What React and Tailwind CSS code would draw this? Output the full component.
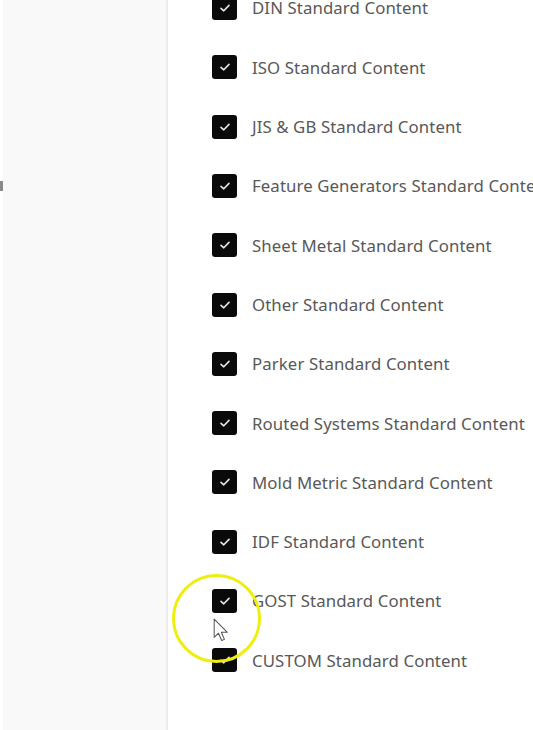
import React from 'react';

const items = [
  'DIN Standard Content',
  'ISO Standard Content',
  'JIS & GB Standard Content',
  'Feature Generators Standard Content',
  'Sheet Metal Standard Content',
  'Other Standard Content',
  'Parker Standard Content',
  'Routed Systems Standard Content',
  'Mold Metric Standard Content',
  'IDF Standard Content',
  'GOST Standard Content',
  'CUSTOM Standard Content',
];

function CheckBox() {
  return (
    <div className="w-[25px] h-[24px] shrink-0 rounded-[3px] bg-[#0a0a0a] flex items-center justify-center">
      <svg width="12" height="10" viewBox="0 0 12 10" fill="none">
        <path d="M2 5.3 L4.8 7.8 L10 2.4" stroke="#e8e8e8" strokeWidth="1.6" strokeLinecap="round" strokeLinejoin="round" />
      </svg>
    </div>
  );
}

export default function App() {
  return (
    <div className="w-[533px] h-[730px] overflow-hidden bg-white flex relative" style={{ fontFamily: '"Noto Sans", sans-serif' }}>
      {/* left strip */}
      <div className="w-[3px] shrink-0 bg-white relative">
        <div className="absolute left-0 top-[181px] w-[3px] h-[10px] bg-[#8a8a8a]" />
      </div>
      {/* side panel */}
      <div className="w-[165px] shrink-0 bg-[#f9f9f9] border-r-2 border-[#ececec]" />
      {/* list */}
      <div className="flex-1 overflow-hidden">
        <div className="-mt-[21.6px] pl-[44px]">
          {items.map((label) => (
            <div key={label} className="h-[59.3px] flex items-center gap-[15px] whitespace-nowrap">
              <CheckBox />
              <span className="text-[16.8px] text-[#585858] tracking-[0.1px]">{label}</span>
            </div>
          ))}
        </div>
      </div>
      {/* cursor highlight */}
      <div className="absolute left-[172px] top-[574px] w-[89px] h-[89px] rounded-full border-[3.5px] border-[#eeee10] pointer-events-none" />
      <svg className="absolute left-[213px] top-[618px]" width="16" height="25" viewBox="0 0 14 22">
        <path d="M1 1 L1 17 L4.8 13.4 L7.6 19.8 L10 18.8 L7.3 12.6 L12.6 12.6 Z" fill="#fff" stroke="#555" strokeWidth="0.9" strokeLinejoin="round" />
      </svg>
    </div>
  );
}
